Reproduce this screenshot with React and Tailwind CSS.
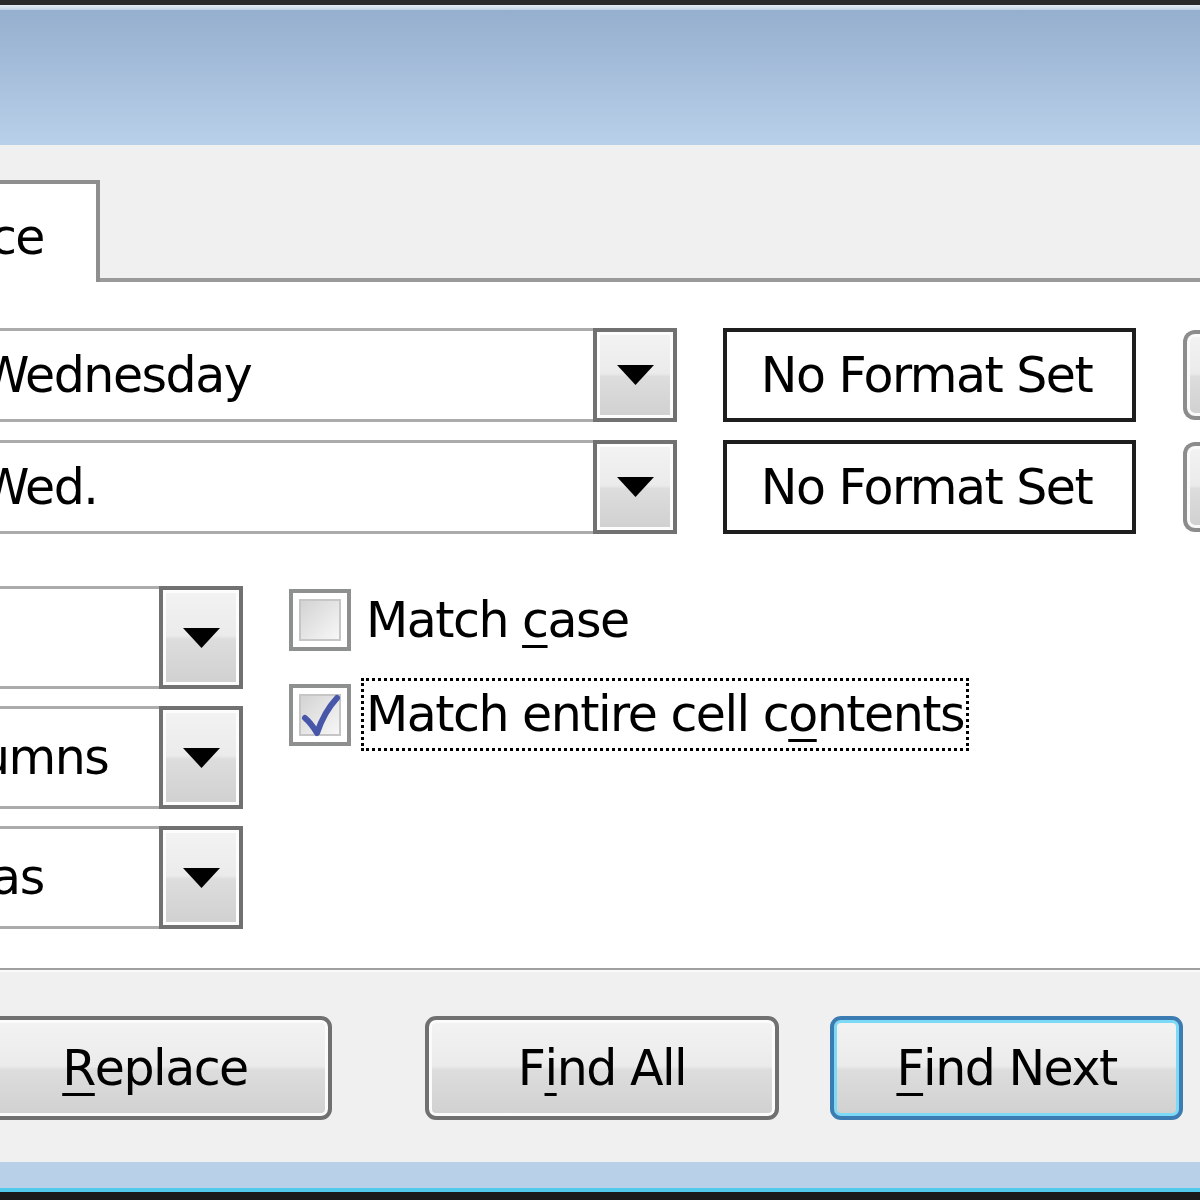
import React from 'react'

const txt = "font-['DejaVu_Sans',sans-serif] text-[49px] tracking-[-1.5px] leading-none text-black whitespace-nowrap"
const btnFill = 'bg-[linear-gradient(to_bottom,#f3f3f3_0%,#ebebeb_48%,#dddddd_52%,#d0d0d0_100%)]'

function Arrow() {
  return (
    <svg width="37" height="20" viewBox="0 0 37 20">
      <path d="M0 0H37L18.5 20Z" fill="#000" />
    </svg>
  )
}

function Combo({ text, className, pad, btnW }) {
  return (
    <div className={`flex shrink-0 border-[3px] border-[#ababab] bg-white ${className}`}>
      <div className={`flex-1 flex items-center overflow-hidden ${pad} ${txt}`}>{text}</div>
      <div className={`-my-[3px] -mr-[3px] shrink-0 ${btnW} border-[4px] border-[#717171] shadow-[inset_0_0_0_3px_#fdfdfd] ${btnFill} flex items-center justify-center`}>
        <Arrow />
      </div>
    </div>
  )
}

function FormatBox() {
  return (
    <div className={`w-[413px] shrink-0 border-[4px] border-[#1e1e1e] bg-white flex items-center justify-center pr-[6px] ${txt}`}>
      No Format Set
    </div>
  )
}

function SideBtn() {
  return (
    <div className={`self-center shrink-0 h-[90px] w-[60px] rounded-l-[12px] border-[4px] border-r-0 border-[#8c8c8c] shadow-[inset_0_0_0_3px_#fafafa] ${btnFill}`} />
  )
}

function Check({ checked }) {
  return (
    <div className="relative w-[62px] h-[62px] shrink-0 border-[4px] border-[#8e8f8f] bg-white p-[6px]">
      <div className="w-full h-full border-[2px] border-[#c6c6c6] bg-[linear-gradient(135deg,#d3d3d3,#f7f7f7)]" />
      {checked && (
        <svg className="absolute -left-[4px] -top-[4px]" width="62" height="62" viewBox="0 0 62 62">
          <path d="M16 34 Q22 39 28 49 Q35 28 48 14" fill="none" stroke="#4756a8" strokeWidth="6" strokeLinecap="round" strokeLinejoin="round" />
        </svg>
      )}
    </div>
  )
}

function U({ children }) {
  return <span className="underline decoration-[3px] underline-offset-[8px]">{children}</span>
}

function Button({ children, className, focused }) {
  const border = focused
    ? 'border-[#3b7db3] shadow-[inset_0_0_0_3px_#7cdaf7]'
    : 'border-[#707070] shadow-[inset_0_0_0_3px_#fbfbfb]'
  return (
    <div className={`h-[104px] shrink-0 rounded-[11px] border-[4px] ${border} ${btnFill} flex items-center justify-center ${txt} ${className}`}>
      {children}
    </div>
  )
}

export default function App() {
  return (
    <div className="w-[1200px] h-[1200px] overflow-hidden flex flex-col bg-white">
      {/* window frame top */}
      <div className="h-[5px] shrink-0 bg-[#2b2b2b]" />
      <div className="h-[5px] shrink-0 bg-gradient-to-b from-[#e6edf5] to-[#c2d3e6]" />
      <div className="h-[135px] shrink-0 bg-gradient-to-b from-[#95afce] to-[#b9d0e9]" />

      {/* tab strip */}
      <div className="h-[137px] shrink-0 bg-[#f0f0f0] flex items-end">
        <div className={`w-[100px] h-[102px] shrink-0 bg-white border-t-[4px] border-r-[4px] border-[#8e8e8e] flex items-center justify-end pr-[52px] pt-[8px] ${txt}`}>
          Replace
        </div>
        <div className="flex-1 h-[4px] bg-[#9a9a9a]" />
      </div>

      {/* tab page */}
      <div className="h-[686px] shrink-0 bg-white pt-[46px]">
        <div className="flex h-[94px]">
          <Combo text="Wednesday" className="ml-[-30px] w-[707px]" pad="pl-[8px]" btnW="w-[84px]" />
          <div className="ml-[46px] flex shrink-0"><FormatBox /></div>
          <div className="ml-[47px] flex shrink-0"><SideBtn /></div>
        </div>
        <div className="flex h-[94px] mt-[18px]">
          <Combo text="Wed." className="ml-[-30px] w-[707px]" pad="pl-[8px]" btnW="w-[84px]" />
          <div className="ml-[46px] flex shrink-0"><FormatBox /></div>
          <div className="ml-[47px] flex shrink-0"><SideBtn /></div>
        </div>

        <div className="flex mt-[52px]">
          <div className="flex flex-col gap-[17px] shrink-0">
            <Combo text="Sheet" className="ml-[-200px] w-[443px] h-[103px]" pad="pl-[29px]" btnW="w-[84px]" />
            <Combo text="By Columns" className="ml-[-200px] w-[443px] h-[103px]" pad="pl-[29px]" btnW="w-[84px]" />
            <Combo text="Formulas" className="ml-[-200px] w-[443px] h-[103px]" pad="pl-[29px]" btnW="w-[84px]" />
          </div>
          <div className="ml-[46px] mt-[3px] flex flex-col shrink-0">
            <div className="flex items-center h-[62px]">
              <Check />
              <span className={`ml-[15px] ${txt}`}>Match <U>c</U>ase</span>
            </div>
            <div className="flex items-center h-[73px] mt-[27px]">
              <Check checked />
              <span className={`ml-[10px] h-[73px] px-[2px] flex items-center border-[3px] border-dotted border-black ${txt}`}>
                Match entire cell c<U>o</U>ntents
              </span>
            </div>
          </div>
        </div>
      </div>

      {/* separator */}
      <div className="h-[2px] shrink-0 bg-[#a0a0a0]" />
      <div className="h-[2px] shrink-0 bg-[#fafafa]" />

      {/* buttons */}
      <div className="h-[190px] shrink-0 bg-[#f0f0f0] pt-[44px] flex items-start">
        <Button className="ml-[-22px] w-[354px]"><U>R</U>eplace</Button>
        <Button className="ml-[93px] w-[354px]">F<U>i</U>nd All</Button>
        <Button className="ml-[51px] w-[353px]" focused><U>F</U>ind Next</Button>
      </div>

      {/* window frame bottom */}
      <div className="h-[26px] shrink-0 bg-[#b9d0e9]" />
      <div className="h-[4px] shrink-0 bg-[#52c9ea]" />
      <div className="flex-1 bg-[#1a1a1a]" />
    </div>
  )
}
